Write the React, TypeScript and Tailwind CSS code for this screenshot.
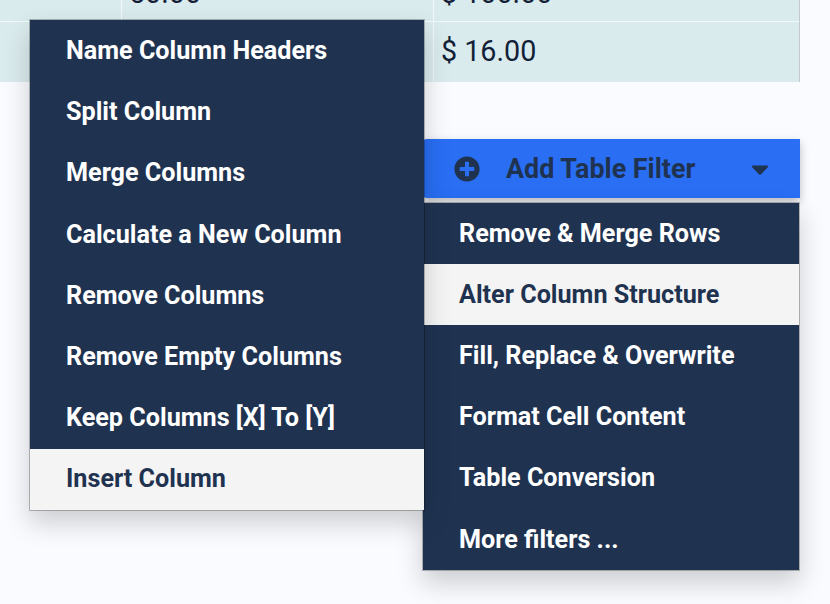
import { FaCaretDown, FaPlusCircle } from "react-icons/fa";

interface MenuProps {
  items: string[];
  active: string;
  className: string;
  itemClassName?: string;
}

const rows = [
  ["", "50.00", "$ 100.00"],
  ["", "", "$ 16.00"],
];

const filterGroups = [
  "Remove & Merge Rows",
  "Alter Column Structure",
  "Fill, Replace & Overwrite",
  "Format Cell Content",
  "Table Conversion",
  "More filters ...",
];

const columnFilters = [
  "Name Column Headers",
  "Split Column",
  "Merge Columns",
  "Calculate a New Column",
  "Remove Columns",
  "Remove Empty Columns",
  "Keep Columns [X] To [Y]",
  "Insert Column",
];

function Menu({ items, active, className, itemClassName = "" }: MenuProps) {
  return (
    <ul
      className={`flex flex-col border border-black/25 bg-[#1f3351] bg-clip-padding shadow-[0_12px_24px_rgba(0,0,0,0.18)] ${className}`}
    >
      {items.map((item) => (
        <li
          key={item}
          className={`flex h-[61.23px] shrink-0 items-center whitespace-nowrap pl-9 text-[25.18px] font-bold leading-[25px] last:h-auto last:flex-1 ${itemClassName} ${
            item === active ? "bg-[#f4f4f4] text-[#1f3351]" : "text-white"
          }`}
        >
          {item}
        </li>
      ))}
    </ul>
  );
}

export default function App() {
  return (
    <div className="relative h-[604px] w-[830px] overflow-hidden bg-[#fafbff] font-['Roboto',sans-serif]">
      <div className="flex h-[82px] w-[800px] flex-col justify-end overflow-hidden border-r border-[#c3cbce] bg-[#daebee]">
        {rows.map((row, index) => (
          <div
            key={index}
            className="flex h-[61px] shrink-0 border-t border-[#f2f8fa] text-[28.7px] text-[#131f38] first:leading-[48px]"
          >
            <div className="w-[122px] border-r border-[#f2f8fa]">{row[0]}</div>
            <div
              className={`flex w-[312px] items-center border-r border-[#f2f8fa] pl-[7px] ${index === 0 ? "pt-1" : ""}`}
            >
              {row[1]}
            </div>
            <div className={`flex flex-1 items-center pl-[7px] ${index === 0 ? "pt-1" : ""}`}>
              {row[2]}
            </div>
          </div>
        ))}
      </div>

      <div className="ml-[423px] mt-[57px] w-[377px]">
        <button className="flex h-[59px] w-full items-center rounded-l bg-[#296ef3] px-[31px] text-[#1f3351] shadow-[0_4px_10px_rgba(0,0,0,0.25)]">
          <FaPlusCircle className="mt-px size-[26px]" />
          <span className="ml-[26px] whitespace-nowrap pt-0.5 text-[26.9px] font-bold">
            Add Table Filter
          </span>
          <FaCaretDown className="ml-auto h-[28px] w-[18px]" />
        </button>
        <Menu
          items={filterGroups}
          active="Alter Column Structure"
          className="-ml-px mt-1 h-[369px] w-[378px]"
          itemClassName="pb-[1.05px] last:pb-0"
        />
      </div>

      <Menu
        items={columnFilters}
        active="Insert Column"
        className="absolute left-[29px] top-[19px] h-[492px] w-[396px]"
        itemClassName="pb-[0.2px] last:pb-[1.5px]"
      />
    </div>
  );
}
